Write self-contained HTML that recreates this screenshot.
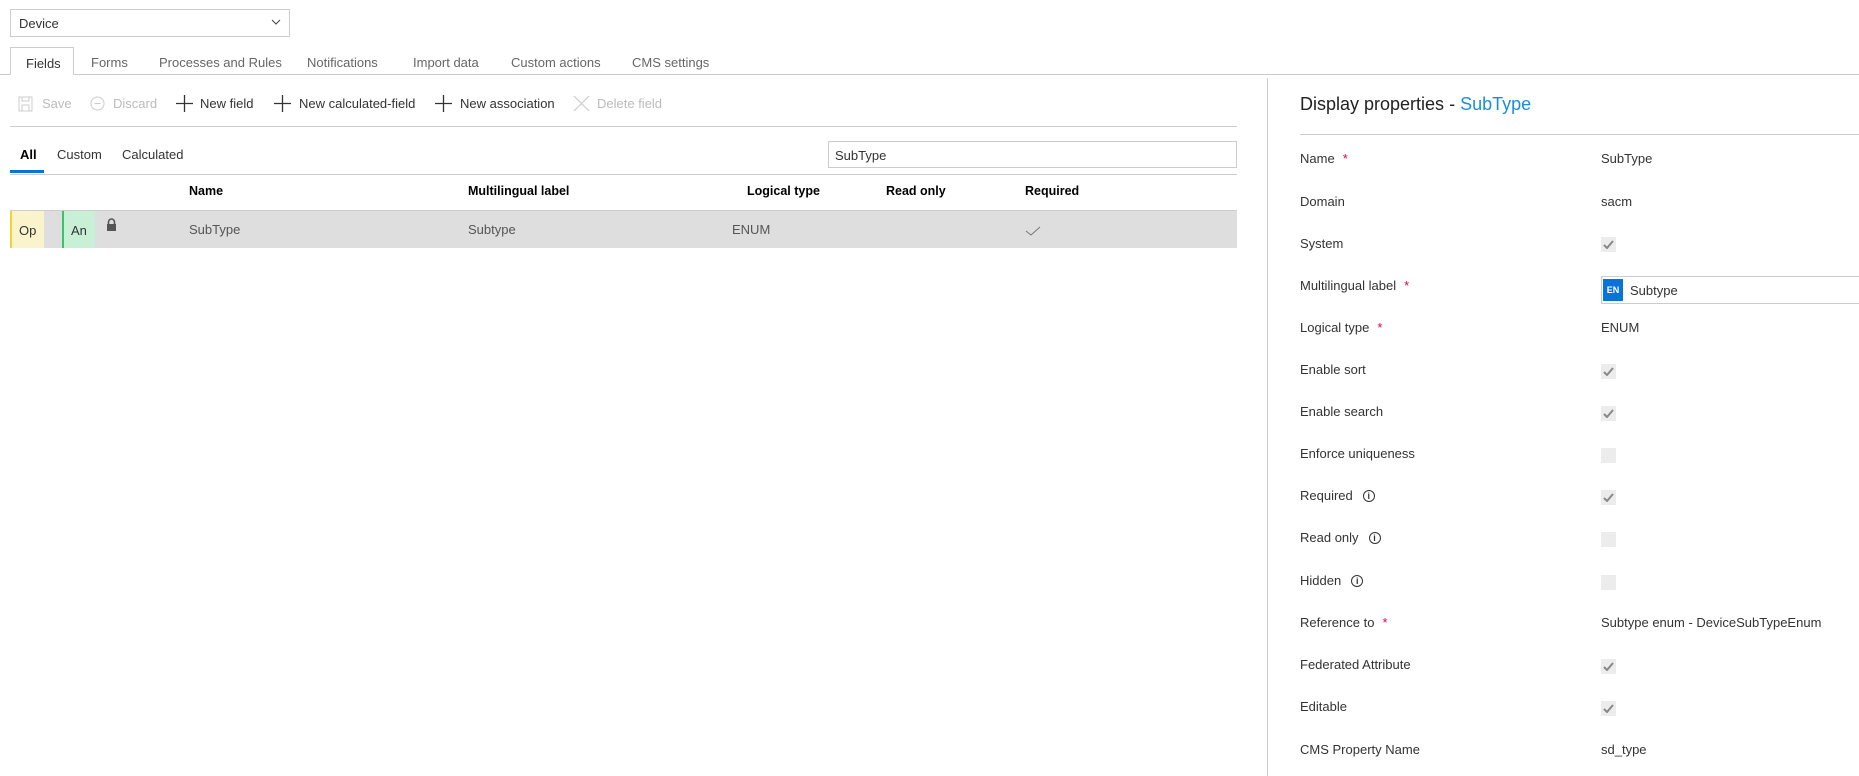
<!DOCTYPE html>
<html><head><meta charset="utf-8"><style>
*{box-sizing:border-box;margin:0;padding:0}
body{width:1859px;height:776px;background:#fff;font-family:"Liberation Sans",sans-serif;font-size:13px;color:#333;position:relative;overflow:hidden}
.a{position:absolute;white-space:nowrap}
.cb{position:absolute;width:15px;height:15px;background:#ececec}
.cb svg{position:absolute;left:2px;top:3px}
.st{color:#e0004d;margin-left:8px}
.info{display:inline-block;width:12px;height:12px;border:1.3px solid #333;border-radius:50%;font-size:9px;line-height:10px;text-align:center;font-weight:bold;margin-left:10px;vertical-align:1px}
.h{font-weight:bold;color:#000;font-size:12.5px}
</style></head><body>
<div class="a" style="left:10px;top:9px;width:280px;height:28px;border:1px solid #ccc"></div>
<div class="a" style="left:19px;top:16px;font-size:13px">Device</div>
<svg class="a" style="left:271px;top:19px" width="10" height="7"><path d="M1 1 L5 5 L9 1" stroke="#444" fill="none"/></svg>

<div class="a" style="left:0;top:74px;width:1859px;height:1px;background:#ccc"></div>
<div class="a" style="left:10px;top:47px;width:64px;height:28px;border:1px solid #ccc;border-bottom:none;background:#fff"></div>
<div class="a" style="left:26px;top:56px;font-size:13px">Fields</div>
<div class="a" style="left:91px;top:55px;color:#666">Forms</div>
<div class="a" style="left:159px;top:55px;color:#666">Processes and Rules</div>
<div class="a" style="left:307px;top:55px;color:#666">Notifications</div>
<div class="a" style="left:413px;top:55px;color:#666">Import data</div>
<div class="a" style="left:511px;top:55px;color:#666">Custom actions</div>
<div class="a" style="left:632px;top:55px;color:#666">CMS settings</div>

<svg class="a" style="left:18px;top:96px" width="16" height="16"><rect x="1" y="1" width="13" height="14" fill="none" stroke="#ccc"/><rect x="4" y="1" width="7" height="4" fill="none" stroke="#ccc"/><rect x="4" y="9" width="7" height="6" fill="none" stroke="#ccc"/></svg>
<div class="a" style="left:42px;top:96px;color:#bbb">Save</div>
<svg class="a" style="left:90px;top:96px" width="16" height="16"><circle cx="7.5" cy="7.5" r="6.5" fill="none" stroke="#ccc"/><path d="M4.5 7.5 H10.5" stroke="#ccc"/></svg>
<div class="a" style="left:113px;top:96px;color:#bbb">Discard</div>
<svg class="a" style="left:176px;top:95px" width="17" height="17"><path d="M8.5 0 V17 M0 8.5 H17" stroke="#333" stroke-width="1.3"/></svg>
<div class="a" style="left:200px;top:96px">New field</div>
<svg class="a" style="left:274px;top:95px" width="17" height="17"><path d="M8.5 0 V17 M0 8.5 H17" stroke="#333" stroke-width="1.3"/></svg>
<div class="a" style="left:299px;top:96px">New calculated-field</div>
<svg class="a" style="left:435px;top:95px" width="17" height="17"><path d="M8.5 0 V17 M0 8.5 H17" stroke="#333" stroke-width="1.3"/></svg>
<div class="a" style="left:460px;top:96px">New association</div>
<svg class="a" style="left:573px;top:95px" width="17" height="17"><path d="M1 1 L16 16 M16 1 L1 16" stroke="#ccc" stroke-width="1.2"/></svg>
<div class="a" style="left:597px;top:96px;color:#bbb">Delete field</div>
<div class="a" style="left:10px;top:126px;width:1227px;height:1px;background:#ccc"></div>

<div class="a" style="left:20px;top:147px;font-weight:bold;color:#000">All</div>
<div class="a" style="left:57px;top:147px">Custom</div>
<div class="a" style="left:122px;top:147px">Calculated</div>
<div class="a" style="left:10px;top:170px;width:34px;height:3px;background:#0a73d9"></div>
<div class="a" style="left:828px;top:141px;width:409px;height:27px;border:1px solid #ccc"></div>
<div class="a" style="left:835px;top:148px">SubType</div>
<div class="a" style="left:10px;top:174px;width:1227px;height:1px;background:#ccc"></div>

<div class="a h" style="left:189px;top:184px">Name</div>
<div class="a h" style="left:468px;top:184px">Multilingual label</div>
<div class="a h" style="left:747px;top:184px">Logical type</div>
<div class="a h" style="left:886px;top:184px">Read only</div>
<div class="a h" style="left:1025px;top:184px">Required</div>

<div class="a" style="left:10px;top:210px;width:1227px;height:38px;background:#dedede;border-top:1px solid #ccc"></div>
<div class="a" style="left:10px;top:211px;width:34px;height:37px;background:#fbf3cc;border-left:2px solid #f0d23a"></div>
<div class="a" style="left:19px;top:223px">Op</div>
<div class="a" style="left:62px;top:211px;width:33px;height:37px;background:#c8f0d6;border-left:2px solid #3cc26a"></div>
<div class="a" style="left:71px;top:223px">An</div>
<svg class="a" style="left:106px;top:218px" width="11" height="14"><path d="M2.5 6 V4 a3 3 0 0 1 6 0 V6" fill="none" stroke="#555" stroke-width="1.6"/><rect x="1" y="6" width="9" height="7" fill="#555"/></svg>
<div class="a" style="left:189px;top:222px;color:#555">SubType</div>
<div class="a" style="left:468px;top:222px;color:#555">Subtype</div>
<div class="a" style="left:732px;top:222px;color:#555">ENUM</div>
<svg class="a" style="left:1025px;top:225px" width="16" height="12"><path d="M1 6 L6 10 L15 2" stroke="#777" fill="none"/></svg>

<div class="a" style="left:1267px;top:78px;width:1px;height:698px;background:#ccc"></div>
<div class="a" style="left:1300px;top:94px;font-size:18px;color:#222">Display properties - <span style="color:#1a8fd8">SubType</span></div>
<div class="a" style="left:1300px;top:134px;width:559px;height:1px;background:#ccc"></div>

<div class="a" style="left:1300px;top:151px">Name<span class="st">*</span></div>
<div class="a" style="left:1601px;top:151px">SubType</div>
<div class="a" style="left:1300px;top:194px">Domain</div>
<div class="a" style="left:1601px;top:194px">sacm</div>
<div class="a" style="left:1300px;top:236px">System</div>
<div class="a" style="left:1300px;top:278px">Multilingual label<span class="st">*</span></div>
<div class="a" style="left:1601px;top:276px;width:258px;height:28px;border:1px solid #ccc;border-right:none"></div>
<div class="a" style="left:1603px;top:279px;width:20px;height:22px;background:#0a73d9;color:#fff;font-size:9px;font-weight:bold;text-align:center;line-height:22px">EN</div>
<div class="a" style="left:1630px;top:283px">Subtype</div>
<div class="a" style="left:1300px;top:320px">Logical type<span class="st">*</span></div>
<div class="a" style="left:1601px;top:320px">ENUM</div>
<div class="a" style="left:1300px;top:362px">Enable sort</div>
<div class="a" style="left:1300px;top:404px">Enable search</div>
<div class="a" style="left:1300px;top:446px">Enforce uniqueness</div>
<div class="a" style="left:1300px;top:488px">Required<span class="info">i</span></div>
<div class="a" style="left:1300px;top:530px">Read only<span class="info">i</span></div>
<div class="a" style="left:1300px;top:573px">Hidden<span class="info">i</span></div>
<div class="a" style="left:1300px;top:615px">Reference to<span class="st">*</span></div>
<div class="a" style="left:1601px;top:615px">Subtype enum - DeviceSubTypeEnum</div>
<div class="a" style="left:1300px;top:657px">Federated Attribute</div>
<div class="a" style="left:1300px;top:699px">Editable</div>
<div class="a" style="left:1300px;top:742px">CMS Property Name</div>
<div class="a" style="left:1601px;top:742px">sd_type</div>

<div class="cb" style="left:1601px;top:237px"><svg width="11" height="9"><path d="M1 5 L4 8 L10 1" stroke="#888" stroke-width="2" fill="none"/></svg></div>
<div class="cb" style="left:1601px;top:364px"><svg width="11" height="9"><path d="M1 5 L4 8 L10 1" stroke="#888" stroke-width="2" fill="none"/></svg></div>
<div class="cb" style="left:1601px;top:406px"><svg width="11" height="9"><path d="M1 5 L4 8 L10 1" stroke="#888" stroke-width="2" fill="none"/></svg></div>
<div class="cb" style="left:1601px;top:448px"></div>
<div class="cb" style="left:1601px;top:490px"><svg width="11" height="9"><path d="M1 5 L4 8 L10 1" stroke="#888" stroke-width="2" fill="none"/></svg></div>
<div class="cb" style="left:1601px;top:532px"></div>
<div class="cb" style="left:1601px;top:575px"></div>
<div class="cb" style="left:1601px;top:659px"><svg width="11" height="9"><path d="M1 5 L4 8 L10 1" stroke="#888" stroke-width="2" fill="none"/></svg></div>
<div class="cb" style="left:1601px;top:701px"><svg width="11" height="9"><path d="M1 5 L4 8 L10 1" stroke="#888" stroke-width="2" fill="none"/></svg></div>
</body></html>
